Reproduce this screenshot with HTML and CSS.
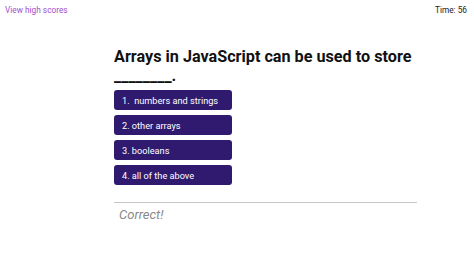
FILE: index.html
```html
<!DOCTYPE html>
<html>
<head>
<meta charset="utf-8">
<link rel="stylesheet" href="styles.css">
</head>
<body>
<header class="top">
  <a class="scores" href="#">View high scores</a>
  <span class="timer">Time: 56</span>
</header>
<main class="quiz">
  <h1 class="question">Arrays in JavaScript can be used to store ________.</h1>
  <div class="choices">
    <button class="choice">1.&nbsp; numbers and strings</button>
    <button class="choice">2. other arrays</button>
    <button class="choice">3. booleans</button>
    <button class="choice">4. all of the above</button>
  </div>
  <div class="result">Correct!</div>
</main>
</body>
</html>
```
FILE: styles.css
```css
html, body {
  margin: 0;
  padding: 0;
  background: #fff;
  font-family: Roboto, "Liberation Sans", sans-serif;
}
.top {
  display: flex;
  justify-content: space-between;
  padding: 4px 7px 0 5px;
  font-size: 8.3px;
  line-height: 12px;
}
.scores {
  color: #a34fd0;
  text-decoration: none;
}
.timer {
  color: #222;
}
.quiz {
  margin: 31px 0 0 114px;
  width: 303px;
}
.question {
  margin: 0;
  width: 325px;
  font-size: 16.2px;
  font-weight: 700;
  line-height: 19px;
  color: #111;
}
.choices {
  margin-top: 5px;
  display: flex;
  flex-direction: column;
  gap: 5px;
  align-items: flex-start;
}
.choice {
  width: 118px;
  height: 20px;
  border: none;
  border-radius: 3px;
  background: #2f1a6f;
  color: #fff;
  font-family: Roboto, "Liberation Sans", sans-serif;
  font-size: 9.2px;
  text-align: left;
  padding: 0 0 0 8px;
  margin: 0;
}
.result {
  margin-top: 17px;
  border-top: 1px solid #c8c8c8;
  padding: 4px 0 0 5px;
  font-size: 13px;
  font-style: italic;
  color: #8a8a8a;
}
```
